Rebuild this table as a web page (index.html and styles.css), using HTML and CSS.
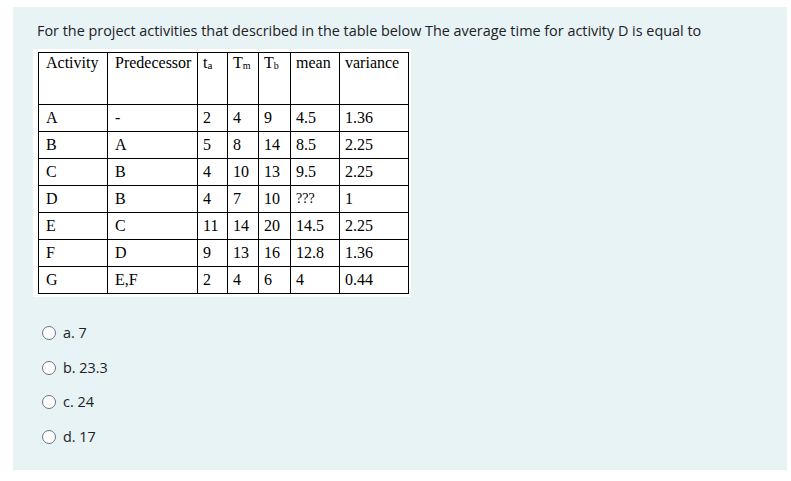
FILE: index.html
```html
<!DOCTYPE html>
<html>
<head>
<meta charset="utf-8">
<link rel="stylesheet" href="styles.css">
</head>
<body>
<div class="panel">
  <p class="qtext">For the project activities that described in the table below The average time for activity D is equal to</p>
  <div class="tablewrap">
    <table class="pert">
      <colgroup>
        <col class="c1"><col class="c2"><col class="c3"><col class="c4"><col class="c5"><col class="c6"><col class="c7">
      </colgroup>
      <tr class="head">
        <td>Activity</td><td>Predecessor</td><td>t<sub class="sa">a</sub></td><td>T<sub>m</sub></td><td>T<sub>b</sub></td><td>mean</td><td>variance</td>
      </tr>
      <tr><td>A</td><td>-</td><td>2</td><td>4</td><td>9</td><td>4.5</td><td>1.36</td></tr>
      <tr><td>B</td><td>A</td><td>5</td><td>8</td><td>14</td><td>8.5</td><td>2.25</td></tr>
      <tr><td>C</td><td>B</td><td>4</td><td>10</td><td>13</td><td>9.5</td><td>2.25</td></tr>
      <tr><td>D</td><td>B</td><td>4</td><td>7</td><td>10</td><td class="q">???</td><td>1</td></tr>
      <tr><td>E</td><td>C</td><td>11</td><td>14</td><td>20</td><td>14.5</td><td>2.25</td></tr>
      <tr><td>F</td><td>D</td><td>9</td><td>13</td><td>16</td><td>12.8</td><td>1.36</td></tr>
      <tr><td>G</td><td>E,F</td><td>2</td><td>4</td><td>6</td><td>4</td><td>0.44</td></tr>
    </table>
  </div>
  <div class="answers">
    <label class="opt"><span class="radio"></span><span>a. 7</span></label>
    <label class="opt"><span class="radio"></span><span>b. 23.3</span></label>
    <label class="opt"><span class="radio"></span><span>c. 24</span></label>
    <label class="opt"><span class="radio"></span><span>d. 17</span></label>
  </div>
</div>
</body>
</html>
```
FILE: styles.css
```css
html, body {
  margin: 0;
  padding: 0;
  background: #ffffff;
}
body {
  padding: 7px 4px 0 13px;
  font-family: "Open Sans", "Noto Sans", sans-serif;
  color: #1d2125;
}
.panel {
  width: 774px;
  height: 463px;
  box-sizing: border-box;
  background: #e7f3f5;
  padding: 13px 20px 0 20px;
}
.qtext {
  margin: 0;
  padding-left: 4px;
  font-size: 14.4px;
  line-height: 22px;
}
.tablewrap {
  display: inline-block;
  background: #ffffff;
  margin-top: 7px;
  padding: 3px 2px 3px 5px;
}
.pert {
  border-collapse: collapse;
  table-layout: fixed;
  width: 370px;
  font-family: "Liberation Serif", "Times New Roman", serif;
  font-size: 16px;
  color: #000;
}
.pert td {
  border: 1px solid #000;
  padding: 0 4px 0 7px;
  line-height: 18px;
  vertical-align: middle;
  white-space: nowrap;
  overflow: hidden;
}
.pert tr { height: 27px; }
.pert tr.head { height: 52px; }
.pert tr.head td { vertical-align: top; padding-top: 1px; }
.pert td:nth-child(n+3) { padding-left: 5px; }
.c1 { width: 69px; }
.c2 { width: 90px; }
.c3 { width: 30px; }
.c4 { width: 31px; }
.c5 { width: 32px; }
.c6 { width: 49px; }
.c7 { width: 69px; }
.pert sub {
  font-size: 10px;
  vertical-align: -1px;
  line-height: 0;
}
.pert sub.sa { font-size: 11px; }
.pert td.q { font-size: 14px; }
.answers {
  display: flex;
  flex-direction: column;
  gap: 12.5px;
  margin-top: 20px;
  padding-left: 9px;
}
.opt {
  display: flex;
  align-items: center;
  gap: 7px;
  font-size: 14.4px;
  line-height: 22px;
}
.radio {
  width: 12px;
  height: 12px;
  border: 1px solid #6a737b;
  border-radius: 50%;
  background: #fff;
  flex: none;
}
```
